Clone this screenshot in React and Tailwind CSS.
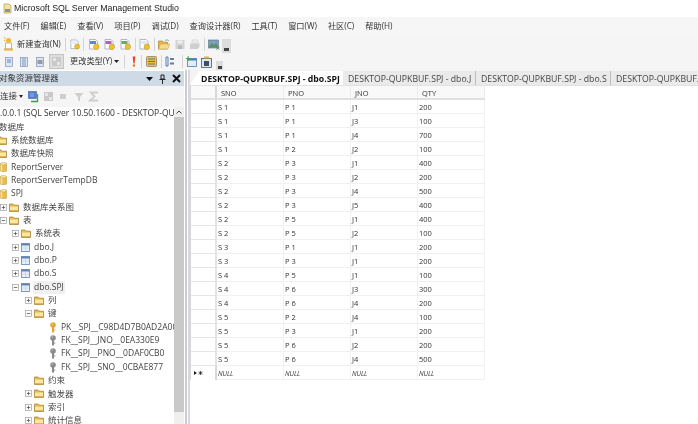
const cjk = "font-['Open_Sans','Noto_Sans_CJK_SC',sans-serif]";
const titleFont = "font-['Liberation_Sans','Noto_Sans_CJK_SC',sans-serif]";

const rows = [
  ["S 1", "P 1", "J1", "200"], ["S 1", "P 1", "J3", "100"], ["S 1", "P 1", "J4", "700"], ["S 1", "P 2", "J2", "100"],
  ["S 2", "P 3", "J1", "400"], ["S 2", "P 3", "J2", "200"], ["S 2", "P 3", "J4", "500"], ["S 2", "P 3", "J5", "400"],
  ["S 2", "P 5", "J1", "400"], ["S 2", "P 5", "J2", "100"], ["S 3", "P 1", "J1", "200"], ["S 3", "P 3", "J1", "200"],
  ["S 4", "P 5", "J1", "100"], ["S 4", "P 6", "J3", "300"], ["S 4", "P 6", "J4", "200"], ["S 5", "P 2", "J4", "100"],
  ["S 5", "P 3", "J1", "200"], ["S 5", "P 6", "J2", "200"], ["S 5", "P 6", "J4", "500"],
];

const menu = ["文件(F)", "编辑(E)", "查看(V)", "项目(P)", "调试(D)", "查询设计器(R)", "工具(T)", "窗口(W)", "社区(C)", "帮助(H)"];

const Folder = () => (
  <svg width="10" height="9" viewBox="0 0 10 9" className="shrink-0">
    <path d="M0.5 1h3.5l1 1.2h4.5v6.3h-9z" fill="#e9bd4e" stroke="#9c7a30" strokeWidth="0.7" />
    <path d="M1 3.6h8v4.4H1z" fill="#fae7a2" />
    <path d="M1 7.2h8v0.9H1z" fill="#d9a93c" />
  </svg>
);

const Db = () => (
  <svg width="7" height="10" viewBox="0 0 7 10" className="shrink-0">
    <path d="M0.3 1.5h6.4v7.6c-1.5 0.9-4.9 0.9-6.4 0z" fill="#ecbc45" stroke="#a8843a" strokeWidth="0.4" />
    <path d="M0.7 2h1.6v7H0.7z" fill="#f9e29a" />
    <ellipse cx="3.5" cy="1.7" rx="3.1" ry="1.2" fill="#fbe9a8" stroke="#a8843a" strokeWidth="0.4" />
  </svg>
);

const TableIcon = () => (
  <svg width="9" height="9" viewBox="0 0 9 9" className="shrink-0">
    <rect x="0.5" y="0.5" width="8" height="8" fill="#e6eefa" stroke="#5f83b8" strokeWidth="0.8" />
    <rect x="0.5" y="0.5" width="8" height="2" fill="#5f83b8" />
    <path d="M1 5h7M4.5 3v5" stroke="#b3c6e2" strokeWidth="0.5" />
  </svg>
);

const Key = ({ color }) => (
  <svg width="8" height="11" viewBox="0 0 8 11" className="shrink-0">
    <circle cx="4" cy="3" r="2.8" fill={color} />
    <circle cx="3.2" cy="2" r="0.7" fill="#fff" opacity="0.6" />
    <path d="M3 5h2v5.5H3z" fill={color} />
    <path d="M5 7.5h1.3v1H5z" fill={color} />
  </svg>
);

const Box = ({ open }) => (
  <svg width="7" height="7" viewBox="0 0 7 7" className="shrink-0">
    <rect x="0.5" y="0.5" width="6" height="6" fill="#fff" stroke="#a0a0a0" strokeWidth="0.7" />
    <path d="M1.8 3.5h3.4" stroke="#555" strokeWidth="0.8" />
    {!open && <path d="M3.5 1.8v3.4" stroke="#555" strokeWidth="0.8" />}
  </svg>
);

const NewQuery = () => (
  <svg width="9" height="14" viewBox="0 0 9 14" className="shrink-0">
    <path d="M1.5 6h6v6h-6z" fill="#fff" stroke="#8c8c8c" strokeWidth="0.6" />
    <circle cx="4.5" cy="3.5" r="2.6" fill="#edb93f" />
    <path d="M0 11.5h9V13.5H0z" fill="#e8b33a" />
    <path d="M0 0.5h1.5v1H0zM0 3h1v1H0z" fill="#d8a838" />
  </svg>
);

// document with a small coloured band and the yellow database dot
const DbDoc = ({ band, w = 11 }) => (
  <svg width={w} height="11" viewBox="0 0 11 11" className="shrink-0">
    <path d="M1 0.5h6l2 2v7.5H1z" fill="#fff" stroke="#8f9db2" strokeWidth="0.7" />
    <path d="M1.5 2h6v3h-6z" fill={band} />
    <circle cx="7.8" cy="7.8" r="2.8" fill="#f0c02f" stroke="#a88620" strokeWidth="0.4" />
  </svg>
);

const OpenFolder = () => (
  <svg width="12" height="11" viewBox="0 0 12 11" className="shrink-0">
    <path d="M0.5 2h4l1 1.2h4v6.8h-9z" fill="#e6b84c" stroke="#9c7a30" strokeWidth="0.6" />
    <path d="M2.5 5H12L9.8 10H0.5z" fill="#f7db86" stroke="#b08c3a" strokeWidth="0.4" />
    <path d="M7 1.5c1.5-1 3-.7 4 .5" fill="none" stroke="#6f8fb0" strokeWidth="0.8" />
  </svg>
);

const GraySave = () => (
  <svg width="10" height="11" viewBox="0 0 10 11" className="shrink-0">
    <rect x="0.5" y="1" width="9" height="9" fill="#d4d4d4" />
    <rect x="2.5" y="1.5" width="5" height="3" fill="#eee" />
    <rect x="3" y="6.5" width="4" height="3.5" fill="#b9b9b9" />
  </svg>
);

const GrayPrint = () => (
  <svg width="11" height="11" viewBox="0 0 11 11" className="shrink-0">
    <path d="M3 1h6v3H3z" fill="#eee" stroke="#c8c8c8" strokeWidth="0.5" />
    <path d="M1 4.5h9.5V8l-2 2H1z" fill="#cfcfcf" />
  </svg>
);

const Pic = () => (
  <svg width="12" height="11" viewBox="0 0 12 11" className="shrink-0">
    <rect x="0.5" y="1" width="10" height="8" fill="#7f9fb8" stroke="#52708a" strokeWidth="0.6" />
    <path d="M1 7l3-3 2 2 2-2 2 3v1.5H1z" fill="#5d8f6a" />
    <path d="M8 8l3.5 2.5M11.5 8L8 10.5" stroke="#4f9a52" strokeWidth="0.9" />
  </svg>
);

const Pane = ({ w = 8, children }) => (
  <svg width={w} height="10" viewBox="0 0 8 10" className="shrink-0">
    <rect x="0.5" y="0.5" width="7" height="9" fill="#dbe5f3" stroke="#7f93b8" strokeWidth="0.7" />
    {children}
  </svg>
);

const GrayCell = () => (
  <svg width="9" height="9" viewBox="0 0 9 9">
    <rect width="9" height="9" fill="#c9c9c9" />
    <path d="M1 1h3v3H1z" fill="#e6e6e6" />
    <path d="M5 5h3v3H5z" fill="#e6e6e6" />
  </svg>
);

const RunCheck = () => (
  <svg width="11" height="11" viewBox="0 0 11 11" className="shrink-0">
    <rect x="0.5" y="0.5" width="10" height="10" rx="1" fill="#e9c24a" stroke="#8a7a4a" strokeWidth="0.7" />
    <path d="M2 3h7M2 5.5h7M2 8h7" stroke="#6f6a8a" strokeWidth="1" />
  </svg>
);

const ColumnIcon = () => (
  <svg width="10" height="11" viewBox="0 0 10 11" className="shrink-0">
    <path d="M3 1H1v9h2M3 1v9" fill="none" stroke="#3f6fb0" strokeWidth="0.9" />
    <path d="M5 2h4v2H5zM5 6.5h4v2H5z" fill="#6a7c96" />
  </svg>
);

const AddTable = () => (
  <svg width="11" height="11" viewBox="0 0 11 11" className="shrink-0">
    <rect x="1.5" y="2.5" width="9" height="8" fill="#e1ecf7" stroke="#4f80ad" strokeWidth="0.8" />
    <rect x="1.5" y="2.5" width="9" height="2" fill="#4f80ad" />
    <path d="M0 2.5h4.5M2.2 0.3v4.4" stroke="#3fa04f" strokeWidth="1.2" />
  </svg>
);

const ScriptIcon = () => (
  <svg width="11" height="12" viewBox="0 0 11 12" className="shrink-0">
    <rect x="0.5" y="2.5" width="10" height="9" fill="#dfe6ee" stroke="#4a5a6a" strokeWidth="0.8" />
    <path d="M3 5h5v5H3z" fill="#3e4f5f" />
    <path d="M3 2.5h5V0.5H3z" fill="#d8b24a" />
  </svg>
);

const ConnectIcon = () => (
  <svg width="11" height="12" viewBox="0 0 11 12" className="shrink-0">
    <rect x="0.5" y="0.5" width="8" height="7" fill="#4f7fd0" stroke="#2f55a0" strokeWidth="0.5" />
    <path d="M2 3h4M2 5h4" stroke="#cfe0f8" strokeWidth="0.6" />
    <path d="M9.5 3v7.5H3" fill="none" stroke="#3fa04f" strokeWidth="1.3" />
  </svg>
);

const Sep = ({ className = "" }) => <div className={`w-px h-[13px] bg-[#d4d4d4] shrink-0 ${className}`} />;

const TreeRow = ({ indent, box, icon, children, selected }) => (
  <div className={`h-[13.35px] flex items-center whitespace-nowrap ${indent}`}>
    {box !== undefined && <div className="w-[9px] shrink-0"><Box open={box === "open"} /></div>}
    {icon}
    <span className={`ml-[3px] px-[1px] ${selected ? "bg-[#f0f0f0]" : ""}`}>{children}</span>
  </div>
);

const Cell = ({ children, className = "" }) => (
  <div className={`w-[67px] shrink-0 h-[14px] flex items-center pl-[1px] pt-[3px] border-r border-b border-[#f1f1f1] ${className}`}>{children}</div>
);

export default function App() {
  return (
    <div className={`w-[698px] h-[424px] overflow-hidden bg-white flex flex-col text-[#333] blur-[0.35px] ${cjk}`}>
      <div className="h-[17px] flex items-center shrink-0 bg-white pl-[3px]">
        <svg width="9" height="11" viewBox="0 0 9 11" className="mr-[2px]">
          <path d="M1 1h5l2 2v7H1z" fill="#f4e3a0" stroke="#b09a50" strokeWidth="0.7" />
          <path d="M2 6h5v3H2z" fill="#7c93b8" />
        </svg>
        <span className={`text-[8.8px] text-[#222] ${titleFont}`}>Microsoft SQL Server Management Studio</span>
      </div>

      <div className="h-[18px] bg-[#f6f6f6] flex items-center gap-[11px] pl-[4px] text-[8.2px] text-[#333] shrink-0">
        {menu.map((m) => <span key={m}>{m}</span>)}
      </div>

      <div className="h-[18px] bg-[#f5f5f5] flex items-center shrink-0 pl-[4px]">
        <NewQuery />
        <span className="text-[8.2px] ml-[4px] w-[44px] whitespace-nowrap">新建查询(N)</span>
        <Sep className="ml-[4px]" />
        <div className="ml-[4px]"><DbDoc band="#e8eef7" w={10} /></div>
        <Sep className="ml-[3px]" />
        <div className="ml-[4px]"><DbDoc band="#5f8ac0" w={12} /></div>
        <div className="ml-[4px]"><DbDoc band="#b45fb8" /></div>
        <div className="ml-[5px]"><DbDoc band="#6fa860" /></div>
        <Sep className="ml-[4px]" />
        <div className="ml-[3px]"><DbDoc band="#dfe8f5" /></div>
        <Sep className="ml-[4px]" />
        <div className="ml-[3px]"><OpenFolder /></div>
        <div className="ml-[5px]"><GraySave /></div>
        <div className="ml-[4px]"><GrayPrint /></div>
        <Sep className="ml-[4px]" />
        <div className="ml-[3px]"><Pic /></div>
        <div className="ml-[2px] w-[9px] h-[14px] self-end bg-[#dcdcdc] flex items-end justify-center pb-[2px] shrink-0">
          <div className="w-[5px] h-[3px] bg-[#444]" />
        </div>
      </div>

      <div className="h-[17px] bg-[#f5f5f5] flex items-center shrink-0 pl-[5px]">
        <Pane><path d="M2 3h4M2 5h4" stroke="#3f6fb0" strokeWidth="0.8" /></Pane>
        <div className="ml-[7px]"><Pane><path d="M3 1v8M5 1v8" stroke="#6f86ad" strokeWidth="0.8" /></Pane></div>
        <div className="ml-[8px]"><Pane><path d="M1.5 4h5M1.5 6h5" stroke="#555" strokeWidth="1" /></Pane></div>
        <div className="ml-[5px] w-[15px] h-[15px] bg-[#dedede] border border-[#c4c4c4] flex items-center justify-center shrink-0"><GrayCell /></div>
        <span className="text-[8.2px] ml-[6px] w-[42px] whitespace-nowrap">更改类型(Y)</span>
        <svg width="5" height="3" viewBox="0 0 5 3" className="ml-[2px] shrink-0"><path d="M0 0h5L2.5 3z" fill="#222" /></svg>
        <Sep className="ml-[5px]" />
        <svg width="4" height="11" viewBox="0 0 4 11" className="ml-[7px] shrink-0">
          <path d="M0.6 0.5h2.8L2.6 7.5H1.4z" fill="#dc4a2e" />
          <circle cx="2" cy="9.5" r="1.2" fill="#dc7a2e" />
        </svg>
        <Sep className="ml-[5px]" />
        <div className="ml-[4px]"><RunCheck /></div>
        <Sep className="ml-[4px]" />
        <div className="ml-[3px]"><ColumnIcon /></div>
        <Sep className="ml-[7px]" />
        <div className="ml-[3px]"><AddTable /></div>
        <div className="ml-[4px]"><ScriptIcon /></div>
        <div className="ml-[4px] w-[7px] h-[9px] self-end bg-[#dcdcdc] flex items-end justify-center pb-[1px] shrink-0">
          <div className="w-[4px] h-[3px] bg-[#444]" />
        </div>
      </div>

      <div className="flex-1 flex min-h-0">
        <div className="w-[184px] shrink-0 flex flex-col bg-white">
          <div className="h-[15px] mt-px bg-[#cfdae7] flex items-center text-[8.5px] text-[#333] shrink-0">
            <span className="ml-[-1px] flex-1 whitespace-nowrap">对象资源管理器</span>
            <svg width="7" height="4" viewBox="0 0 7 4" className="mr-[6px]"><path d="M0 0h7L3.5 4z" fill="#111" /></svg>
            <svg width="7" height="10" viewBox="0 0 7 10" className="mr-[6px]">
              <path d="M2 1h3v4H2zM0.5 5.5h6M3.5 5.5V10" fill="none" stroke="#222" strokeWidth="1" />
            </svg>
            <svg width="9" height="9" viewBox="0 0 9 9" className="mr-[3px]">
              <path d="M1 1l7 7M8 1l-7 7" stroke="#111" strokeWidth="2" />
            </svg>
          </div>
          <div className="h-[21px] bg-[#f5f5f5] flex items-center text-[8.5px] shrink-0">
            <span className="whitespace-nowrap w-[18px]">连接</span>
            <svg width="4" height="3" viewBox="0 0 4 3" className="ml-[1px]"><path d="M0 0h4L2 3z" fill="#222" /></svg>
            <div className="ml-[5px]"><ConnectIcon /></div>
            <div className="ml-[5px]"><GrayCell /></div>
            <div className="w-[6px] h-[5px] bg-[#cfcfcf] ml-[7px]" />
            <svg width="10" height="10" viewBox="0 0 10 10" className="ml-[8px]"><path d="M0.5 1h9L6 5v4.5L4 8V5z" fill="#cfcfcf" /></svg>
            <svg width="12" height="11" viewBox="0 0 12 11" className="ml-[4px]">
              <path d="M10 1.5H3L6.5 5.5 2 9.5h8" fill="none" stroke="#cfcfcf" strokeWidth="2" />
            </svg>
          </div>
          <div className="flex-1 flex min-h-0">
            <div className="w-[174px] shrink-0 overflow-hidden text-[8.5px] text-[#444]">
              <div className="h-[13.35px] flex items-center whitespace-nowrap text-[#333]">.0.0.1 (SQL Server 10.50.1600 - DESKTOP-QU</div>
              <div className="h-[13.35px] flex items-center whitespace-nowrap ml-[-1px]">数据库</div>
              <TreeRow indent="ml-[-3px]" icon={<Folder />}>系统数据库</TreeRow>
              <TreeRow indent="ml-[-3px]" icon={<Folder />}>数据库快照</TreeRow>
              <TreeRow indent="ml-[0px]" icon={<Db />}>ReportServer</TreeRow>
              <TreeRow indent="ml-[0px]" icon={<Db />}>ReportServerTempDB</TreeRow>
              <TreeRow indent="ml-[0px]" icon={<Db />}>SPJ</TreeRow>
              <TreeRow indent="pl-[0px]" box="closed" icon={<Folder />}>数据库关系图</TreeRow>
              <TreeRow indent="pl-[0px]" box="open" icon={<Folder />}>表</TreeRow>
              <TreeRow indent="pl-[12px]" box="closed" icon={<Folder />}>系统表</TreeRow>
              <TreeRow indent="pl-[12px]" box="closed" icon={<TableIcon />}>dbo.J</TreeRow>
              <TreeRow indent="pl-[12px]" box="closed" icon={<TableIcon />}>dbo.P</TreeRow>
              <TreeRow indent="pl-[12px]" box="closed" icon={<TableIcon />}>dbo.S</TreeRow>
              <TreeRow indent="pl-[12px]" box="open" icon={<TableIcon />} selected>dbo.SPJ</TreeRow>
              <TreeRow indent="pl-[25px]" box="closed" icon={<Folder />}>列</TreeRow>
              <TreeRow indent="pl-[25px]" box="open" icon={<Folder />}>键</TreeRow>
              <TreeRow indent="pl-[49px]" icon={<Key color="#e0a838" />}>PK__SPJ__C98D4D7B0AD2A00</TreeRow>
              <TreeRow indent="pl-[49px]" icon={<Key color="#8a8a8a" />}>FK__SPJ__JNO__0EA330E9</TreeRow>
              <TreeRow indent="pl-[49px]" icon={<Key color="#8a8a8a" />}>FK__SPJ__PNO__0DAF0CB0</TreeRow>
              <TreeRow indent="pl-[49px]" icon={<Key color="#8a8a8a" />}>FK__SPJ__SNO__0CBAE877</TreeRow>
              <TreeRow indent="pl-[34px]" icon={<Folder />}>约束</TreeRow>
              <TreeRow indent="pl-[25px]" box="closed" icon={<Folder />}>触发器</TreeRow>
              <TreeRow indent="pl-[25px]" box="closed" icon={<Folder />}>索引</TreeRow>
              <TreeRow indent="pl-[25px]" box="closed" icon={<Folder />}>统计信息</TreeRow>
            </div>
            <div className="w-[10px] shrink-0 bg-[#efefef] flex flex-col">
              <div className="h-[10px] flex items-center justify-center">
                <svg width="6" height="4" viewBox="0 0 6 4"><path d="M0.5 3.5L3 1l2.5 2.5" fill="none" stroke="#444" /></svg>
              </div>
              <div className="h-[295px] bg-[#c9c9c9]" />
            </div>
          </div>
        </div>

        <div className="w-[6px] shrink-0 bg-white flex">
          <div className="w-px" />
          <div className="w-[2px] bg-[#c9ccd2]" />
          <div className="w-px" />
          <div className="w-[2px] bg-[#d6d8dc]" />
        </div>

        <div className="flex-1 min-w-0 flex flex-col bg-white">
          <div className="h-[16px] bg-[#f3f3f3] flex items-end shrink-0 text-[8.7px] overflow-hidden whitespace-nowrap border-b border-[#e2e2e2]">
            <div className="w-[153px] shrink-0 h-[14px] bg-white flex items-center pl-[11px] pt-[3px] font-bold text-[#111] [clip-path:polygon(9px_0,100%_0,100%_100%,0_100%)]">DESKTOP-QUPKBUF.SPJ - dbo.SPJ</div>
            <div className="w-[133px] shrink-0 h-[14px] bg-[#eaeaea] border-r border-[#bdbdbd] flex items-center pl-[5px] pt-[3px] text-[#444]">DESKTOP-QUPKBUF.SPJ - dbo.J</div>
            <div className="w-[135px] shrink-0 h-[14px] bg-[#eaeaea] border-r border-[#bdbdbd] flex items-center pl-[5px] pt-[3px] text-[#444]">DESKTOP-QUPKBUF.SPJ - dbo.S</div>
            <div className="w-[87px] shrink-0 h-[14px] bg-[#eaeaea] flex items-center pl-[5px] pt-[3px] text-[#444]">DESKTOP-QUPKBUF.SPJ - dbo.SPJ</div>
          </div>

          <div className="w-[295px] text-[7.5px] text-[#333] border-l border-[#d8d8d8]">
            <div className="flex h-[14px] bg-[#f9f9f9] border-b-2 border-[#e0e0e0]">
              <div className="w-[26px] shrink-0 border-r-2 border-[#d8d8d8]" />
              {["SNO", "PNO", "JNO", "QTY"].map((h) => (
                <div key={h} className="w-[67px] shrink-0 flex items-center pl-[4px] pt-[3px] border-r border-[#ececec]">{h}</div>
              ))}
            </div>
            {rows.map((r, i) => (
              <div key={i} className="flex">
                <div className="w-[26px] shrink-0 h-[14px] border-r-2 border-b border-[#e4e4e4]" />
                {r.map((c, j) => (
                  <Cell key={j}>{c}</Cell>
                ))}
              </div>
            ))}
            <div className="flex">
              <div className="w-[26px] shrink-0 h-[14px] border-r-2 border-[#d8d8d8] flex items-center pl-[3px]">
                <svg width="9" height="6" viewBox="0 0 9 6">
                  <path d="M0 1l3 2-3 2z" fill="#222" />
                  <path d="M4.5 3h4M6.5 1v4M5 1.5l3 3M8 1.5l-3 3" stroke="#222" strokeWidth="0.7" />
                </svg>
              </div>
              {[0, 1, 2, 3].map((n) => (
                <Cell key={n} className="italic text-[6.5px]">NULL</Cell>
              ))}
            </div>
          </div>
        </div>
      </div>
    </div>
  );
}
